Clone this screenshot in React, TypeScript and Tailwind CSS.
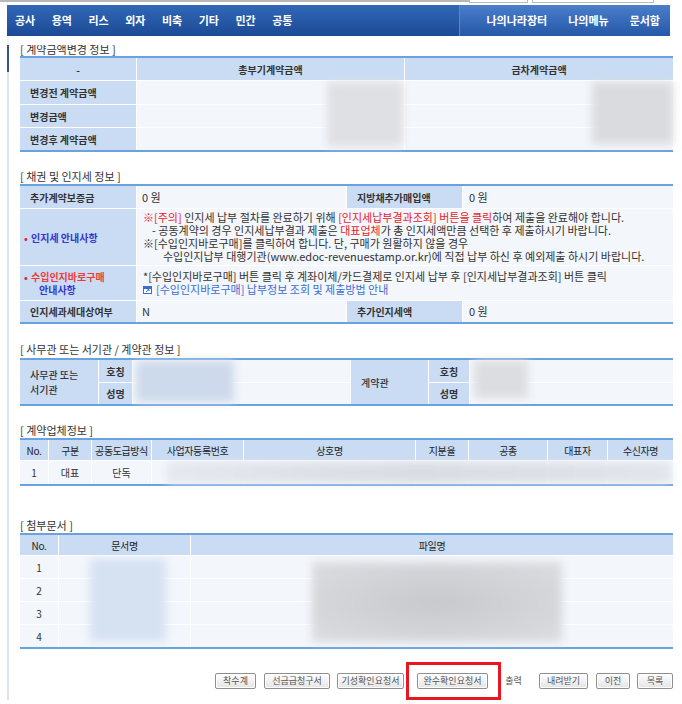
import React from 'react';

const lbl = 'bg-[#c9dcf4] font-bold text-[10px] text-[#333] flex items-center';
const hdr = 'bg-[#c9dcf4] text-[10px] tracking-[-0.4px] text-[#222] flex items-center justify-center';
const val = 'bg-[#f3f6fb] text-[#333] flex items-center';
const tbl = 'relative grid gap-px bg-white border-y-2 border-[#6aa2de]';

function Title({ text, className }: { text: string; className: string }) {
  return <div className={`flex items-center text-[#333] ${className}`}>{text}</div>;
}

function Blur({ className }: { className: string }) {
  return <div className={`absolute pointer-events-none blur-[4px] ${className}`} />;
}

function Btn({ text, w, plain }: { text: string; w: string; plain?: boolean }) {
  return (
    <div
      className={`${w} h-[16px] flex items-center justify-center text-[9px] text-[#555] ${
        plain ? '' : 'border border-[#8f8f8f] rounded-[2px] bg-gradient-to-b from-white to-[#e4e4e4] shadow-[inset_0_0_0_1px_#fff]'
      }`}
    >
      {text}
    </div>
  );
}

export default function App() {
  const navLeft = ['공사', '용역', '리스', '외자', '비축', '기타', '민간', '공통'];
  const navRight = ['나의나라장터', '나의메뉴', '문서함'];

  return (
    <div className="w-[682px] h-[704px] overflow-hidden bg-white font-['Noto_Sans_CJK_KR','Noto_Sans',sans-serif] text-[11px]">
      {/* top strip */}
      <div className="h-[5px] flex">
        <div className="h-[2px] w-[469px] bg-[#b8b8b8]" />
        <div className="h-[3px] w-[59px] border border-t-0 border-[#bbb]" />
        <div className="h-[3px] ml-[4px] w-[122px] border border-t-0 border-[#bbb]" />
      </div>

      {/* nav */}
      <div className="ml-[7px] w-[663px] h-[31px] flex">
        <div className="flex-1 flex items-center gap-[16.5px] pl-[8px] bg-gradient-to-b from-[#3168b8] to-[#1c4a95] text-white font-bold text-[11px]">
          {navLeft.map((n) => (
            <span key={n}>{n}</span>
          ))}
        </div>
        <div className="w-[211px] flex items-center justify-end gap-[21px] pr-[10px] border-l border-[#5b87c8] bg-gradient-to-b from-[#4a7fcb] to-[#2657a8] text-white font-bold text-[11px]">
          {navRight.map((n) => (
            <span key={n}>{n}</span>
          ))}
        </div>
      </div>

      <div className="flex">
        {/* left gutter line */}
        <div className="w-[20px] flex">
          <div className="ml-[7px] w-[2px] flex flex-col">
            <div className="h-[9px] bg-[#eef0f4]" />
            <div className="h-[27px] bg-[#35558f]" />
            <div className="flex-1 bg-[#dfe3ea]" />
          </div>
        </div>

        <div className="w-[653px] flex flex-col">
          {/* 계약금액변경 정보 */}
          <div className="mt-[9px] h-[11px] overflow-hidden flex items-end text-[#333]">
            <span className="leading-[13px]">[ 계약금액변경 정보 ]</span>
          </div>
          <div className={`${tbl} grid-cols-[116px_267px_1fr] grid-rows-[22px_23px_22px_22px]`}>
            <div className={`${lbl} justify-center`}>-</div>
            <div className={`${lbl} justify-center`}>총부기계약금액</div>
            <div className={`${lbl} justify-center`}>금차계약금액</div>
            {['변경전 계약금액', '변경금액', '변경후 계약금액'].map((t) => (
              <React.Fragment key={t}>
                <div className={`${lbl} pl-[10px]`}>{t}</div>
                <div className={val} />
                <div className={val} />
              </React.Fragment>
            ))}
            <Blur className="left-[307px] top-[24px] w-[76px] h-[64px] bg-[#dfe0e3]" />
            <Blur className="left-[572px] top-[24px] w-[81px] h-[62px] bg-[#dadbde]" />
          </div>

          {/* 채권 및 인지세 정보 */}
          <Title text="[ 채권 및 인지세 정보 ]" className="mt-[16px] h-[16px]" />
          <div className={`${tbl} grid-cols-[116px_209px_115px_1fr] grid-rows-[22px_56px_34px_21px]`}>
            <div className={`${lbl} pl-[10px]`}>추가계약보증금</div>
            <div className={`${val} pl-[5px]`}>0 원</div>
            <div className={`${lbl} pl-[10px]`}>지방채추가매입액</div>
            <div className={`${val} pl-[6px]`}>0 원</div>

            <div className={`${lbl} pl-[1px]`}>
              <span className="text-[#e8232a] w-[10px] text-center">•</span>
              <span className="text-[#3535d0]">인지세 안내사항</span>
            </div>
            <div className={`${val} col-span-3 pl-[6px] leading-[13px]`}>
              <div>
                <p>
                  <span className="text-[#e8232a]">※[주의]</span> 인지세 납부 절차를 완료하기 위해{' '}
                  <span className="text-[#e8232a]">[인지세납부결과조회] 버튼을 클릭</span>하여 제출을 완료해야 합니다.
                </p>
                <p className="pl-[9px]">
                  - 공동계약의 경우 인지세납부결과 제출은 <span className="text-[#e8232a]">대표업체</span>가 총 인지세액만큼 선택한 후 제출하시기 바랍니다.
                </p>
                <p>※[수입인지바로구매]를 클릭하여 합니다. 단, 구매가 원활하지 않을 경우</p>
                <p className="pl-[20px]">수입인지납부 대행기관(www.edoc-revenuestamp.or.kr)에 직접 납부 하신 후 예외제출 하시기 바랍니다.</p>
              </div>
            </div>

            <div className={`${lbl} pl-[1px] leading-[13px]`}>
              <div>
                <div className="flex">
                  <span className="text-[#e8232a] w-[10px] text-center">•</span>
                  <span className="text-[#f03a3a]">수입인지바로구매</span>
                </div>
                <div className="pl-[18px] text-[#3535d0]">안내사항</div>
              </div>
            </div>
            <div className={`${val} col-span-3 pl-[6px] leading-[13px]`}>
              <div>
                <p>*[수입인지바로구매] 버튼 클릭 후 계좌이체/카드결제로 인지세 납부 후 [인지세납부결과조회] 버튼 클릭</p>
                <p className="flex items-center text-[#3a6fd0]">
                  <svg width="9" height="8" viewBox="0 0 9 8" className="mr-[4px]">
                    <rect x="0.5" y="0.5" width="8" height="7" fill="#fff" stroke="#3a6fd0" />
                    <rect x="1" y="1" width="7" height="2" fill="#3a6fd0" />
                    <path d="M3 6 L6 3.5 M4.5 3.5 H6 V5" stroke="#3a6fd0" fill="none" />
                  </svg>
                  [수입인지바로구매] 납부정보 조회 및 제출방법 안내
                </p>
              </div>
            </div>

            <div className={`${lbl} pl-[10px]`}>인지세과세대상여부</div>
            <div className={`${val} pl-[5px]`}>N</div>
            <div className={`${lbl} pl-[10px]`}>추가인지세액</div>
            <div className={`${val} pl-[6px]`}>0 원</div>
          </div>

          {/* 사무관 또는 서기관 / 계약관 정보 */}
          <Title text="[ 사무관 또는 서기관 / 계약관 정보 ]" className="mt-[16px] h-[18px]" />
          <div className={`${tbl} grid-cols-[78px_33px_217px_77px_40px_1fr] grid-rows-[22px_21px]`}>
            <div className={`${lbl} !font-medium row-span-2 pl-[10px] leading-[15px]`}>
              <div>
                사무관 또는
                <br />
                서기관
              </div>
            </div>
            <div className={`${lbl} justify-center`}>호칭</div>
            <div className={val} />
            <div className={`${lbl} !font-medium row-span-2 pl-[10px]`}>계약관</div>
            <div className={`${lbl} justify-center`}>호칭</div>
            <div className={val} />
            <div className={`${lbl} justify-center`}>성명</div>
            <div className={val} />
            <div className={`${lbl} justify-center`}>성명</div>
            <div className={val} />
            <Blur className="left-[116px] top-[1px] w-[98px] h-[41px] bg-[#cddaeb]" />
            <Blur className="left-[454px] top-[1px] w-[54px] h-[37px] bg-[#dcdde0]" />
          </div>

          {/* 계약업체정보 */}
          <Title text="[ 계약업체정보 ]" className="mt-[16px] h-[16px]" />
          <div className={`${tbl} grid-cols-[28px_42px_59px_91px_171px_52px_78px_59px_1fr] grid-rows-[20px_23px]`}>
            {['No.', '구분', '공동도급방식', '사업자등록번호', '상호명', '지분율', '공종', '대표자', '수신자명'].map((h) => (
              <div key={h} className={hdr}>
                {h}
              </div>
            ))}
            <div className={`${val} justify-center text-[10px]`}>1</div>
            <div className={`${val} justify-center text-[10px]`}>대표</div>
            <div className={`${val} justify-center text-[10px]`}>단독</div>
            {[0, 1, 2, 3, 4, 5].map((i) => (
              <div key={i} className={val} />
            ))}
            <Blur className="left-[147px] top-[22px] w-[504px] h-[21px] bg-gradient-to-r from-[#e4e8ef] via-[#d9dce2] to-[#e2e5eb]" />
          </div>

          {/* 첨부문서 */}
          <Title text="[ 첨부문서 ]" className="mt-[31px] h-[16px]" />
          <div className={`${tbl} grid-cols-[38px_131px_1fr] grid-rows-[20px_22px_22px_22px_22px]`}>
            <div className={hdr}>No.</div>
            <div className={hdr}>문서명</div>
            <div className={hdr}>파일명</div>
            {[1, 2, 3, 4].map((n) => (
              <React.Fragment key={n}>
                <div className={`${val} justify-center text-[10px]`}>{n}</div>
                <div className={val} />
                <div className={val} />
              </React.Fragment>
            ))}
            <Blur className="left-[70px] top-[24px] w-[76px] h-[82px] bg-[#d6e1f2]" />
            <Blur className="left-[292px] top-[27px] w-[250px] h-[80px] bg-[radial-gradient(ellipse_at_center,#c8c9cc,#dcdde0)]" />
          </div>

          {/* buttons */}
          <div className="mt-[13px] h-[38px] flex items-center">
            <div className="ml-[195px]">
              <Btn text="착수계" w="w-[41px]" />
            </div>
            <div className="ml-[8px]">
              <Btn text="선금급청구서" w="w-[66px]" />
            </div>
            <div className="ml-[7px]">
              <Btn text="기성확인요청서" w="w-[67px]" />
            </div>
            <div className="ml-[2px] w-[95px] h-[38px] border-[3px] border-[#e8161e] flex items-center">
              <div className="ml-[8px]">
                <Btn text="완수확인요청서" w="w-[71px]" />
              </div>
            </div>
            <div className="ml-[1px]">
              <Btn text="출력" w="w-[23px]" plain />
            </div>
            <div className="ml-[14px]">
              <Btn text="내려받기" w="w-[49px]" />
            </div>
            <div className="ml-[8px]">
              <Btn text="이전" w="w-[34px]" />
            </div>
            <div className="ml-[7px]">
              <Btn text="목록" w="w-[36px]" />
            </div>
          </div>
        </div>
      </div>
    </div>
  );
}
